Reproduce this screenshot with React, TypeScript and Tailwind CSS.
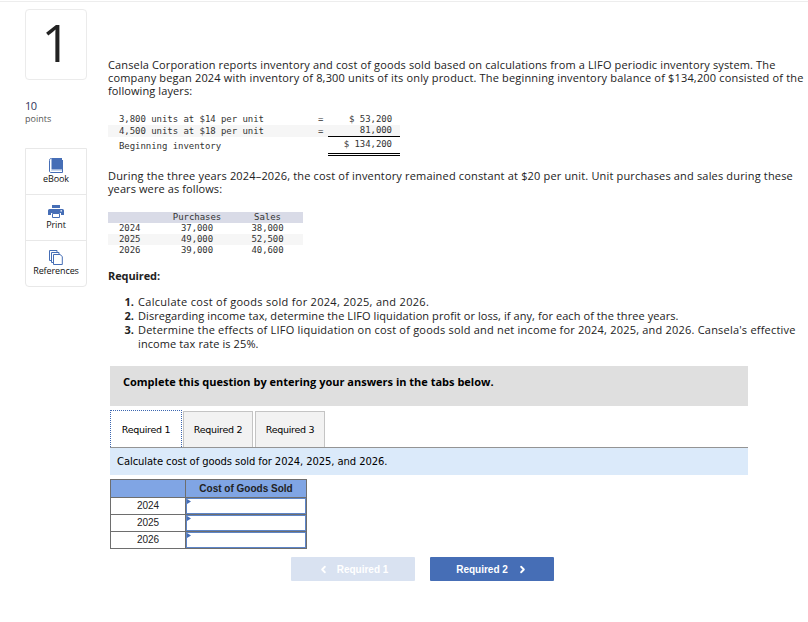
import { useState } from 'react';
import { ChevronLeft, ChevronRight } from 'lucide-react';

const YEARS = ['2024', '2025', '2026'];

const UNITS = [
  { year: '2024', purchases: '37,000', sales: '38,000' },
  { year: '2025', purchases: '49,000', sales: '52,500' },
  { year: '2026', purchases: '39,000', sales: '40,600' },
];

const TABS = ['Required 1', 'Required 2', 'Required 3'];

function BookIcon() {
  return (
    <svg width="14" height="16" viewBox="0 0 14 16" fill="none">
      <path d="M2.500 0H13v11.500H2.500z" fill="#466eb6" />
      <path d="M2.500.5C1 .5.500 1 .500 2.500V13c0 1 .5 1.500 1.500 1.500h11.500V2" stroke="#466eb6" />
      <path d="M2 12.500h11" stroke="#c8d8ef" />
    </svg>
  );
}

function PrintIcon() {
  return (
    <svg width="16" height="14" viewBox="0 0 16 14">
      <path d="M4 0h8v3H4z" fill="#466eb6" />
      <path d="M1.500 4h13A1.500 1.500 0 0 1 16 5.500V10h-3V8H3v2H0V5.500A1.500 1.500 0 0 1 1.500 4z" fill="#466eb6" />
      <path d="M12.500 5.200h1.500v1.300h-1.500z" fill="#fff" />
      <path d="M4.500 8.500h7v4h-7z" fill="#fff" stroke="#466eb6" />
    </svg>
  );
}

function ReferencesIcon() {
  return (
    <svg width="14" height="15" viewBox="0 0 14 15" fill="#fff" stroke="#466eb6">
      <path d="M.5.5h7.500V10.500H.5z" />
      <path d="M2.500 2.500H10v10H2.500z" />
      <path d="M4.500 4.500H11L13.300 6.500V14.500H4.500z" />
    </svg>
  );
}

function Sidebar() {
  return (
    <aside className="w-[62px] shrink-0 pt-[7px]">
      <div className="flex h-[71px] items-center justify-center rounded border border-[#ebebeb] pb-[5px] font-['Open_Sans',sans-serif] text-[51px] leading-none font-medium text-[#222]">
        1
      </div>
      <div className="mt-[19px] font-['Open_Sans',sans-serif] text-[11px] leading-[13px]">
        <p className="tracking-[-0.5px] text-[#33355c]">10</p>
        <p className="text-[9px] text-[#555]">points</p>
      </div>
      <nav className="mt-[23px] divide-y divide-[#e8e8e8] rounded-b border border-[#e8e8e8] text-center font-['Open_Sans',sans-serif] text-[9px] leading-[12px] tracking-[-0.1px] text-[#111]">
        <a className="flex h-[46px] flex-col items-center pt-[9px]">
          <BookIcon />
          <span className="-mt-px">eBook</span>
        </a>
        <a className="flex h-[46px] flex-col items-center pt-[10px]">
          <PrintIcon />
          <span>Print</span>
        </a>
        <a className="flex h-[45px] flex-col items-center pt-[9px]">
          <ReferencesIcon />
          <span>References</span>
        </a>
      </nav>
    </aside>
  );
}

function LayersTable() {
  return (
    <div className="mt-[16px] ml-px w-[292px] font-['DejaVu_Sans_Mono',monospace] text-[9px] leading-[12px] tracking-[-0.05px] text-[#333]">
      <div className="flex h-[12px] pl-[11px]">
        <span className="w-[199px]">3,800 units at $14 per unit</span>
        <span>=</span>
        <span className="ml-auto pr-[8px]">$ 53,200</span>
      </div>
      <div className="flex h-[12px] bg-[#f6f6f6] pl-[11px]">
        <span className="w-[199px]">4,500 units at $18 per unit</span>
        <span>=</span>
        <span className="ml-auto h-[12px] w-[72px] border-b border-black pr-[8px] text-right leading-[11px]">81,000</span>
      </div>
      <div className="flex h-[19px] pl-[11px]">
        <span className="pt-[3px]">Beginning inventory</span>
        <span className="ml-auto h-[19px] w-[72px] border-b-[3px] border-double border-black pr-[8px] pt-px text-right">$ 134,200</span>
      </div>
    </div>
  );
}

function UnitsTable() {
  return (
    <table className="mt-[17px] ml-px w-[195px] table-fixed border-collapse text-center font-['DejaVu_Sans_Mono',monospace] text-[9px] leading-[11px] tracking-[-0.05px] text-[#333]">
      <thead>
        <tr className="bg-[#d9dbe7]">
          <th className="w-[54px]" />
          <th className="w-[70px] font-normal">Purchases</th>
          <th className="font-normal">Sales</th>
        </tr>
      </thead>
      <tbody>
        {UNITS.map((row) => (
          <tr key={row.year} className="even:bg-[#f6f6f6]">
            <td className="pl-[11px] text-left">{row.year}</td>
            <td>{row.purchases}</td>
            <td>{row.sales}</td>
          </tr>
        ))}
      </tbody>
    </table>
  );
}

function AnswerTable() {
  return (
    <table className="mt-[4px] w-[197px] table-fixed border-collapse font-['Liberation_Sans',sans-serif] text-[10px] leading-[12px] text-[#222]">
      <thead>
        <tr className="h-[18px] bg-[#80a5e4]">
          <th className="w-[75px] border border-[#6e6e6e] p-0" />
          <th className="border border-[#6e6e6e] p-0">Cost of Goods Sold</th>
        </tr>
      </thead>
      <tbody>
        {YEARS.map((year) => (
          <tr key={year} className="h-[17px]">
            <td className="border border-[#6e6e6e] p-0 text-center">{year}</td>
            <td className="border border-[#6e6e6e] p-0">
              <div className="h-[16px] border border-[#5d85c8]">
                <svg width="4" height="5" viewBox="0 0 4 5">
                  <path d="M0 0l4 2.500L0 5z" fill="#466eb6" />
                </svg>
              </div>
            </td>
          </tr>
        ))}
      </tbody>
    </table>
  );
}

export default function App() {
  const [activeTab, setActiveTab] = useState(0);

  return (
    <main className="h-[622px] w-[808px] overflow-hidden bg-white pt-px">
      <div className="flex border-t border-[#ededed] pl-[25px]">
        <Sidebar />

        <div className="ml-[20px] w-[701px] pt-[56px] font-['Open_Sans',sans-serif] text-[11px] leading-[13px] text-[#222]">
          {/* Question text */}
          <div className="ml-px whitespace-nowrap">
            <p className="tracking-[0.137px]">Cansela Corporation reports inventory and cost of goods sold based on calculations from a LIFO periodic inventory system. The</p>
            <p className="tracking-[0.167px]">company began 2024 with inventory of 8,300 units of its only product. The beginning inventory balance of $134,200 consisted of the</p>
            <p className="tracking-[0.1px]">following layers:</p>
          </div>

          <LayersTable />

          <div className="mt-[13px] ml-px whitespace-nowrap">
            <p className="tracking-[0.167px]">During the three years 2024–2026, the cost of inventory remained constant at $20 per unit. Unit purchases and sales during these</p>
            <p className="tracking-[0.1px]">years were as follows:</p>
          </div>

          <UnitsTable />

          <p className="mt-[13px] ml-px font-bold tracking-[-0.1px]">Required:</p>

          <ol className="mt-[13px] whitespace-nowrap leading-[14px]">
            <li className="flex">
              <b className="w-[31px] shrink-0 pr-[4px] text-right">1.</b>
              <span className="tracking-[0.3px]">Calculate cost of goods sold for 2024, 2025, and 2026.</span>
            </li>
            <li className="flex">
              <b className="w-[31px] shrink-0 pr-[4px] text-right">2.</b>
              <span className="tracking-[0.075px]">Disregarding income tax, determine the LIFO liquidation profit or loss, if any, for each of the three years.</span>
            </li>
            <li className="flex">
              <b className="w-[31px] shrink-0 pr-[4px] text-right">3.</b>
              <span className="tracking-[0.207px]">
                Determine the effects of LIFO liquidation on cost of goods sold and net income for 2024, 2025, and 2026. Cansela's effective
                <br />
                <span className="tracking-[0.1px]">income tax rate is 25%.</span>
              </span>
            </li>
          </ol>

          {/* Answer area */}
          <section className="ml-[3px] mt-[15px] w-[638px] font-['DejaVu_Sans',sans-serif] text-[10px] text-black">
            <div className="h-[40px] bg-[#dfdfdf] pl-[13px] pt-[9px] font-['Open_Sans',sans-serif] text-[11px] font-bold leading-[13px]">
              Complete this question by entering your answers in the tabs below.
            </div>

            <div className="mt-[4px] flex h-[37px] gap-px text-[9.500px] tracking-[-0.3px]">
              {TABS.map((tab, index) => (
                <button
                  key={tab}
                  onClick={() => setActiveTab(index)}
                  className={
                    index === activeTab
                      ? 'w-[72px] border border-b-0 border-dotted border-[#3c66b0] bg-white'
                      : 'mt-px mr-px w-[70px] border border-b-0 border-[#c4c4c4] bg-[#f2f2f2]'
                  }
                >
                  {tab}
                </button>
              ))}
            </div>
            <div className="h-[28px] border-t border-[#949494] bg-[#dbeafa] pl-[7px] pt-[7px] tracking-[-0.08px]">
              Calculate cost of goods sold for 2024, 2025, and 2026.
            </div>

            <AnswerTable />

            <div className="mt-[8px] flex gap-[15px] pl-[181px] font-['Liberation_Sans',sans-serif] text-[10px] font-bold text-white">
              <button className="flex h-[24px] w-[124px] items-center justify-center gap-[8px] rounded-[1px] bg-[#d9e2f1]">
                <ChevronLeft size={11} strokeWidth={4} />
                Required 1
              </button>
              <button className="flex h-[24px] w-[124px] items-center justify-center gap-[9px] rounded-[1px] bg-[#466eb6]">
                Required 2
                <ChevronRight size={11} strokeWidth={4} />
              </button>
            </div>
          </section>
        </div>
      </div>
    </main>
  );
}
